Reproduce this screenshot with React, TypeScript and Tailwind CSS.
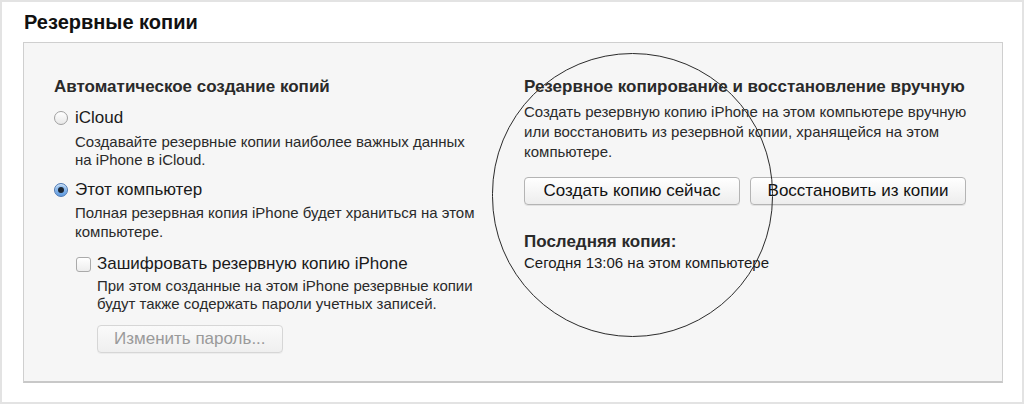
import React from 'react';

const FONT = { fontFamily: '"Liberation Sans", Arial, Helvetica, sans-serif' };

function Radio({ checked }: { checked?: boolean }) {
  if (checked) {
    return (
      <span className="w-[14px] h-[14px] rounded-full border border-[#4d78b3] bg-gradient-to-b from-[#a9cdf3] to-[#5f9be0] flex items-center justify-center shrink-0 shadow-[inset_0_1px_1px_rgba(255,255,255,0.6)]">
        <span className="w-[6px] h-[6px] rounded-full bg-[#1c2633]" />
      </span>
    );
  }
  return (
    <span className="w-[14px] h-[14px] rounded-full border border-[#a0a0a0] bg-gradient-to-b from-white to-[#e8e8e8] shrink-0" />
  );
}

function Button({ children, disabled, wide }: { children: React.ReactNode; disabled?: boolean; wide?: boolean }) {
  return (
    <button
      className={
        (wide ? 'w-full ' : '') +
        (disabled
          ? 'h-[28px] px-[16px] rounded-[4px] border border-[#d6d6d6] bg-gradient-to-b from-[#fafafa] to-[#efefef] text-[17px] text-[#9a9a9a] shadow-[0_1px_0_rgba(0,0,0,0.04)]'
          : 'h-[28px] px-[14px] rounded-[4px] border border-[#b4b4b4] bg-gradient-to-b from-white to-[#ededed] text-[17px] text-[#111] shadow-[0_1px_0_rgba(0,0,0,0.08)]')
      }
      style={FONT}
    >
      {children}
    </button>
  );
}

export default function App() {
  return (
    <div className="relative w-[1024px] h-[404px] bg-white border-2 border-[#e3e3e3] text-[#1a1a1a]" style={FONT}>
      {/* Title */}
      <div className="h-[40px] pl-[22px] flex items-center">
        <h1 className="text-[20px] font-bold text-[#111]">Резервные копии</h1>
      </div>

      {/* Panel */}
      <div className="ml-[21px] w-[980px] h-[341px] bg-[#f6f6f6] border border-[#cfcfcf] border-b-2 border-b-[#c8c8c8] flex">
        {/* Automatic backups */}
        <div className="w-[470px] pl-[30px] pt-[34px]">
          <h2 className="text-[17px] leading-[20px] font-bold text-[#2a2a2a]">Автоматическое создание копий</h2>

          <div className="mt-[11px] flex items-center gap-[7px] h-[20px]">
            <Radio />
            <span className="text-[17px]">iCloud</span>
          </div>
          <p className="ml-[21px] mt-[5px] text-[15px] leading-[18px] text-[#2a2a2a]">
            Создавайте резервные копии наиболее важных данных
            <br />
            на iPhone в iCloud.
          </p>

          <div className="mt-[11px] flex items-center gap-[7px] h-[20px]">
            <Radio checked />
            <span className="text-[17px]">Этот компьютер</span>
          </div>
          <p className="ml-[21px] mt-[4px] text-[15px] leading-[18.5px] text-[#2a2a2a]">
            Полная резервная копия iPhone будет храниться на этом
            <br />
            компьютере.
          </p>

          <div className="ml-[22px] mt-[13px] flex items-center gap-[6px] h-[20px]">
            <span className="w-[15px] h-[15px] rounded-[3px] border border-[#aaaaaa] bg-gradient-to-b from-white to-[#ededed] shrink-0" />
            <span className="text-[17px]">Зашифровать резервную копию iPhone</span>
          </div>
          <p className="ml-[43px] mt-[3px] text-[15px] leading-[18px] text-[#2a2a2a]">
            При этом созданные на этом iPhone резервные копии
            <br />
            будут также содержать пароли учетных записей.
          </p>
          <div className="ml-[43px] mt-[12px]">
            <Button disabled>Изменить пароль...</Button>
          </div>
        </div>

        {/* Manual backup */}
        <div className="pl-[30px] pt-[34px]">
          <h2 className="text-[17px] leading-[20px] font-bold text-[#2a2a2a]">
            Резервное копирование и восстановление вручную
          </h2>
          <p className="mt-[5px] text-[15px] leading-[20px] text-[#2a2a2a]">
            Создать резервную копию iPhone на этом компьютере вручную
            <br />
            или восстановить из резервной копии, хранящейся на этом
            <br />
            компьютере.
          </p>
          <div className="mt-[15px] flex gap-[10px]">
            <div className="w-[216px]">
              <Button wide>Создать копию сейчас</Button>
            </div>
            <div className="w-[216px]">
              <Button wide>Восстановить из копии</Button>
            </div>
          </div>
          <h3 className="mt-[27px] text-[17px] leading-[20px] font-bold text-[#2a2a2a]">Последняя копия:</h3>
          <p className="mt-[1px] text-[15px] leading-[20px] text-[#1a1a1a]">Сегодня 13:06 на этом компьютере</p>
        </div>
      </div>

      {/* Magnifier circle drawn over the screenshot */}
      <div className="absolute left-[490px] top-[51px] w-[281px] h-[284px] rounded-full border-[1.5px] border-[#2b2b2b] pointer-events-none" />
    </div>
  );
}
